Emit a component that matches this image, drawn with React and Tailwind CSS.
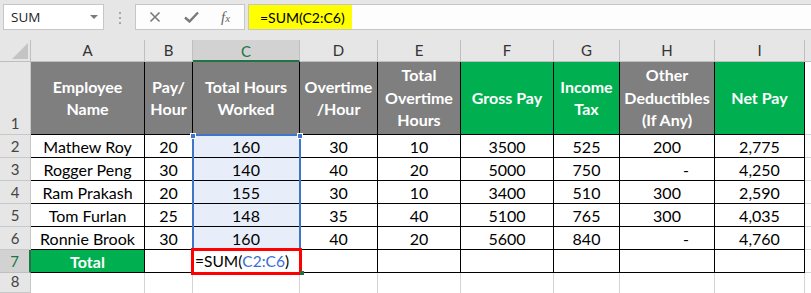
import React from "react";

const font = { fontFamily: "Lato, 'Noto Sans', sans-serif" };

const headers = [
  { lines: ["Employee", "Name"], bg: "bg-[#7f7f7f]" },
  { lines: ["Pay/", "Hour"], bg: "bg-[#7f7f7f]" },
  { lines: ["Total Hours", "Worked"], bg: "bg-[#7f7f7f]" },
  { lines: ["Overtime", "/Hour"], bg: "bg-[#7f7f7f]" },
  { lines: ["Total", "Overtime", "Hours"], bg: "bg-[#7f7f7f]" },
  { lines: ["Gross Pay"], bg: "bg-[#00b050]" },
  { lines: ["Income", "Tax"], bg: "bg-[#00b050]" },
  { lines: ["Other", "Deductibles", "(If Any)"], bg: "bg-[#7f7f7f]" },
  { lines: ["Net Pay"], bg: "bg-[#00b050]" },
];

const rows = [
  ["Mathew Roy", "20", "160", "30", "10", "3500", "525", "200", "2,775"],
  ["Rogger Peng", "30", "140", "40", "20", "5000", "750", "-", "4,250"],
  ["Ram Prakash", "20", "155", "30", "10", "3400", "510", "300", "2,590"],
  ["Tom Furlan", "25", "148", "35", "40", "5100", "765", "300", "4,035"],
  ["Ronnie Brook", "30", "160", "40", "20", "5600", "840", "-", "4,760"],
];

const letters = ["A", "B", "C", "D", "E", "F", "G", "H", "I"];

function RowHead({ n, active }) {
  return (
    <div
      className={`flex items-end justify-center border-b border-r text-[15px] leading-[21px] ${
        active
          ? "bg-[#d2d2d2] border-r-2 border-r-[#217346] border-b-[#bfbfbf] text-[#217346]"
          : "bg-[#e6e6e6] border-[#c8c8c8] text-[#444]"
      }`}
    >
      {n}
    </div>
  );
}

function TopBar() {
  return (
    <div className="flex h-[40px] bg-[#e6e6e6] pt-[4px]" style={{ fontFamily: "'Open Sans', sans-serif" }}>
      {/* Name box */}
      <div className="ml-[3px] flex h-[26px] w-[101px] items-center justify-between border border-[#c6c6c6] bg-white pl-[7px] pr-[5px] text-[13.5px] text-[#222]">
        <span>SUM</span>
        <span className="h-0 w-0 border-x-[4px] border-t-[4px] border-x-transparent border-t-[#7a7a7a]"></span>
      </div>

      {/* dots */}
      <div className="flex w-[31px] flex-col items-center gap-[3px] pt-[8px]">
        <span className="h-[2px] w-[2px] bg-[#a8a8a8]"></span>
        <span className="h-[2px] w-[2px] bg-[#a8a8a8]"></span>
        <span className="h-[2px] w-[2px] bg-[#a8a8a8]"></span>
      </div>

      {/* cancel / enter / fx */}
      <div className="flex h-[26px] w-[110px] items-center border border-[#c6c6c6] bg-[#fdfdfd]">
        <svg width="12" height="12" viewBox="0 0 12 12" className="ml-[13px]">
          <path d="M1.5 1.5 L10.5 10.5 M10.5 1.5 L1.5 10.5" stroke="#7a7a7a" strokeWidth="1.6" fill="none" />
        </svg>
        <svg width="15" height="12" viewBox="0 0 15 12" className="ml-[23px]">
          <path d="M1 6.5 L5.5 10.5 L14 1.5" stroke="#7a7a7a" strokeWidth="2.4" fill="none" />
        </svg>
        <span
          className="ml-[22px] text-[15px] italic leading-none text-[#666]"
          style={{ fontFamily: "'Liberation Serif', serif" }}
        >
          f<span className="text-[11px]">x</span>
        </span>
      </div>

      {/* formula input */}
      <div className="ml-[3px] flex h-[26px] flex-1 border-y border-l border-[#c6c6c6] bg-[#fdfdfd]">
        <div
          className="flex h-full w-[103px] items-center bg-[#ffff00] pl-[11px] text-[14px] text-black"
          style={font}
        >
          =SUM(C2:C6)
        </div>
      </div>
    </div>
  );
}

export default function App() {
  return (
    <div className="h-[293px] w-[811px] overflow-hidden bg-white">
      <TopBar />

      <div
        className="relative grid grid-cols-[31px_114px_48px_107px_78px_83px_93px_66px_95px_90px_1fr] grid-rows-[22px_73px_23px_23px_23px_23px_23px_23px_20px]"
        style={font}
      >
        {/* corner */}
        <div className="relative border-b border-r border-[#bfbfbf] bg-[#e6e6e6]">
          <svg width="16" height="16" viewBox="0 0 16 16" className="absolute bottom-[2px] right-[2px]">
            <path d="M16 0 L16 16 L0 16 Z" fill="#c4c4c4" />
          </svg>
        </div>

        {/* column letters */}
        {letters.map((l) =>
          l === "C" ? (
            <div
              key={l}
              className="flex items-center justify-center border-b-2 border-r border-b-[#217346] border-r-[#bfbfbf] bg-[#d2d2d2] pt-[2px] text-[15px] text-[#217346]"
            >
              {l}
            </div>
          ) : (
            <div
              key={l}
              className="flex items-center justify-center border-b border-r border-[#bfbfbf] bg-[#e6e6e6] text-[15px] text-[#333]"
            >
              {l}
            </div>
          )
        )}
        <div className="border-b border-[#bfbfbf] bg-[#e6e6e6]"></div>

        {/* row 1 headers */}
        <RowHead n="1" />
        {headers.map((h, i) => (
          <div
            key={i}
            className={`flex flex-col items-center justify-center border-b border-r border-black ${h.bg} text-[16px] font-bold leading-[22.5px] text-white`}
          >
            {h.lines.map((line) => (
              <span key={line}>{line}</span>
            ))}
          </div>
        ))}
        <div className="border-b border-[#d4d4d4]"></div>

        {/* data rows */}
        {rows.map((r, ri) => (
          <React.Fragment key={ri}>
            <RowHead n={ri + 2} />
            {r.map((v, ci) => (
              <div
                key={ci}
                className={`flex items-end border-b border-r border-black text-[16px] leading-[21px] text-black ${
                  ci === 2 ? "bg-[#e8eef9]" : "bg-white"
                } ${v === "-" ? "justify-end pr-[25px]" : "justify-center"}`}
              >
                {v}
              </div>
            ))}
            <div className="border-b border-[#d4d4d4]"></div>
          </React.Fragment>
        ))}

        {/* total row */}
        <RowHead n="7" active />
        <div className="flex items-end justify-center border-b border-r border-black bg-[#00b050] text-[16px] font-bold leading-[21px] text-white">
          Total
        </div>
        <div className="border-b border-r border-black"></div>
        <div className="flex items-end border-b border-r border-black pl-[2px] text-[15.5px] leading-[22px] text-black">
          =SUM(<span className="text-[#3b6fd0]">C2:C6</span>)
        </div>
        <div className="border-b border-r border-black"></div>
        <div className="border-b border-r border-black"></div>
        <div className="border-b border-r border-black"></div>
        <div className="border-b border-r border-black"></div>
        <div className="border-b border-r border-black"></div>
        <div className="border-b border-r border-black"></div>
        <div className="border-b border-[#d4d4d4]"></div>

        {/* row 8 */}
        <RowHead n="8" />
        {letters.map((l) => (
          <div key={l} className="border-r border-[#d4d4d4]"></div>
        ))}
        <div></div>

        {/* selection C2:C6 */}
        <div className="pointer-events-none absolute left-[192px] top-[94px] h-[116px] w-[109px] border-2 border-[#3f75c9]"></div>
        <div className="absolute left-[190px] top-[93px] h-[6px] w-[6px] border border-white bg-[#3f75c9]"></div>
        <div className="absolute left-[297px] top-[93px] h-[6px] w-[6px] border border-white bg-[#3f75c9]"></div>

        {/* active cell C7 */}
        <div className="pointer-events-none absolute left-[191px] top-[208px] h-[27px] w-[111px] border-[3px] border-[#ff0000]"></div>
        <div className="absolute left-[300px] top-[231px] h-[4px] w-[4px] bg-[#217346]"></div>
      </div>
    </div>
  );
}
